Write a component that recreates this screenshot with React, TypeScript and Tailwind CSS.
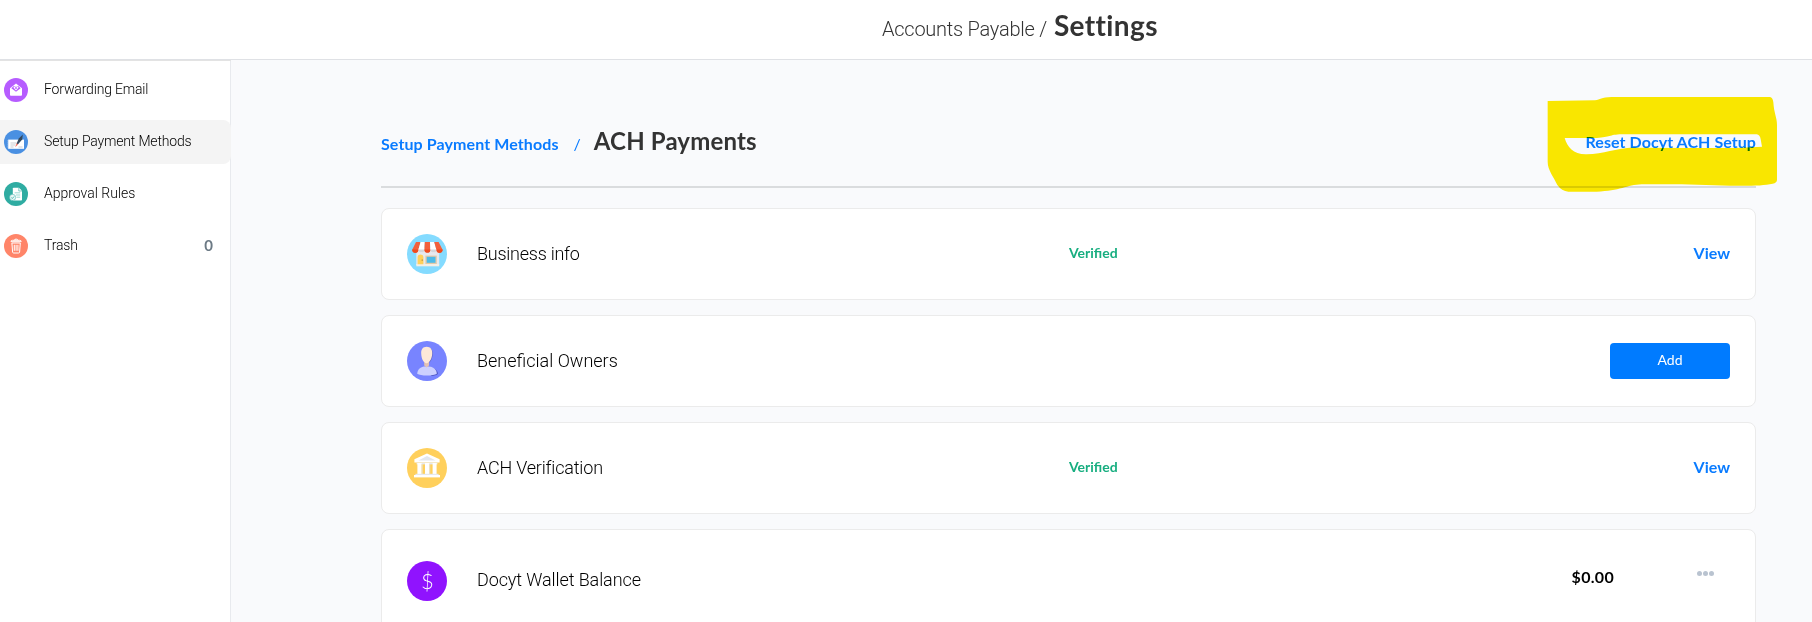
import type { ReactNode } from 'react'

function EmailIcon() {
  return (
    <svg className="size-6 shrink-0" viewBox="0 0 24 24">
      <circle cx="12" cy="12" r="12" fill="#b65cff" />
      <path d="M6 10.2 L12 5.6 L18 10.2 V16.8 Q18 17.7 17.1 17.7 H6.9 Q6 17.7 6 16.8 Z" fill="#fff" />
      <path d="M7.4 10.2 L9.4 8.2 H14.6 L16.6 10.2 L12 13.8 Z" fill="#b65cff" />
      <path d="M9.4 9.6 Q12 6.8 14.6 9.6 L12 12.6 Z" fill="#fff" />
      <circle cx="12" cy="10" r="0.9" fill="#b65cff" />
    </svg>
  )
}

function CheckbookIcon() {
  return (
    <svg className="size-6 shrink-0" viewBox="0 0 24 24">
      <circle cx="12" cy="12" r="12" fill="#4a90e2" />
      <rect x="4.2" y="9.6" width="15.8" height="9.2" fill="#fff" />
      <path d="M4 10.4v8" stroke="#c9def6" strokeWidth="1" strokeDasharray="1 1" />
      <path d="M6.5 13h6M6.5 15h5M6.5 17h3M14.5 17h4" stroke="#b4b9c0" strokeWidth="0.7" />
      <path d="M18.8 4.6 L18.2 9.6 L13.8 14.4 L12.6 13.4 L14.8 8.4 Z" fill="#34495e" />
      <path d="M12.6 13.2 L14 14.4 L11.2 17.2 Z" fill="#f2705f" />
    </svg>
  )
}

function RulesIcon() {
  return (
    <svg className="size-6 shrink-0" viewBox="0 0 24 24">
      <circle cx="12" cy="12" r="12" fill="#2faca2" />
      <path d="M8.8 6.6 Q8.8 5.8 9.6 5.8 H15 L18 8.8 V17.8 Q18 18.6 17.2 18.6 H9.6 Q8.8 18.6 8.8 17.8 Z" fill="#fff" />
      <path d="M14.8 5.8 V9 H18" stroke="#2faca2" strokeWidth="0.6" fill="none" />
      <path d="M10.6 10.8h5.6M12 13h4.2M12.6 15.2h3.6" stroke="#7fcfc8" strokeWidth="0.8" />
      <circle cx="8.6" cy="15.4" r="3.1" fill="#e9f7f6" stroke="#2faca2" strokeWidth="0.5" />
      <path d="M7.2 15.4l1.1 1.1 1.8-2" stroke="#2faca2" strokeWidth="0.8" fill="none" />
    </svg>
  )
}

function TrashIcon() {
  return (
    <svg className="size-6 shrink-0" viewBox="0 0 24 24">
      <circle cx="12" cy="12" r="12" fill="#ff8569" />
      <g fill="none" stroke="#fff" strokeWidth="1">
        <path d="M7 7.7 Q7 6.3 8.4 6.3 H15.8 Q17.2 6.3 17.2 7.7 Z" />
        <path d="M10.4 6.2 Q10.4 5.1 12.1 5.1 T13.8 6.2" />
        <path d="M7.9 9 L8.6 18.1 Q8.7 19 9.6 19 H14.6 Q15.5 19 15.6 18.1 L16.3 9 Z" />
        <path d="M10.3 10.8v6M12.1 10.8v6M13.9 10.8v6" />
      </g>
    </svg>
  )
}

function StoreIcon() {
  return (
    <svg className="size-10 shrink-0" viewBox="0 0 40 40">
      <circle cx="20" cy="20" r="20" fill="#84dbff" />
      <rect x="9.3" y="14" width="22.9" height="17" fill="#e6e9ee" />
      <rect x="9.3" y="30" width="22.9" height="2.3" fill="#f4efe6" />
      <path d="M10.6 30.2V23.4a2.9 2.9 0 0 1 5.8 0v6.8z" fill="#ffd05b" />
      <circle cx="15.2" cy="26" r="0.6" fill="#7a5a2a" />
      <rect x="18.4" y="21.6" width="11.4" height="8.4" fill="#e3c9a8" />
      <rect x="19.7" y="22.8" width="8.8" height="6" fill="#4cbbe8" />
      <path d="M9 8h4.6l-2.2 7.8a3 3 0 0 1-6.2 0z" fill="#f3603c" />
      <path d="M13.6 8h4.2l-.4 7.8a3 3 0 0 1-6 0z" fill="#fff" />
      <path d="M17.8 8h5.2l.4 7.8a3 3 0 0 1-6 0z" fill="#f3603c" />
      <path d="M23 8h4.2l2.2 7.8a3 3 0 0 1-6 0z" fill="#fff" />
      <path d="M27.2 8h4.4l4 7.8a3 3 0 0 1-6.2 0z" fill="#f3603c" />
      <path d="M11.4 15.4h6a3 3 0 0 1-6 .4zM23.4 15.4h6a3 3 0 0 1-6 .4z" fill="#d5d6db" />
      <path d="M17.4 15.4h6a3 3 0 0 1-6 .4zM5.2 15.4h6.2a3 3 0 0 1-6.2 .4zM29.4 15.4h6.2a3 3 0 0 1-6.2 .4z" fill="#ee4a1e" />
    </svg>
  )
}

function PersonIcon() {
  return (
    <svg className="size-10 shrink-0" viewBox="0 0 40 40">
      <circle cx="20" cy="20" r="20" fill="#7884ff" />
      <path d="M22 25.4 C27 26.6 31 29 31 33 C29 34.6 26 35 24 35z" fill="#5058c8" />
      <path d="M20.5 6 C25 6.6 26.2 10.5 25.6 14.5 C25 19 23 22 20.5 22z" fill="#5e63c4" />
      <path d="M10.2 32.8 C10.4 28.4 14 26 17 25.6 H22.4 C26.6 26.2 29.6 28.4 29.8 32.8 Q27 34.6 20 34.6 T10.2 32.8z" fill="#ccd0ff" />
      <path d="M17.2 20 H22 V24.4 L19.7 26.6 L17.2 24.4z" fill="#e2c2b4" />
      <path d="M19.6 5.8 C23.8 5.8 25.4 8.6 25.2 12.6 C25 18 22.4 22.2 19.6 22.2 C16.6 22.2 14.4 18 14.2 12.6 C14 8.6 15.6 5.8 19.6 5.8z" fill="#fde8d8" />
    </svg>
  )
}

function BankIcon() {
  return (
    <svg className="size-10 shrink-0" viewBox="0 0 40 40">
      <circle cx="20" cy="20" r="20" fill="#ffd05c" />
      <path d="M20 5.4 L32.6 11.2 V14.6 H7.4 V11.2z" fill="#fff" />
      <path d="M20 8 L28.6 12.4 H11.4z" fill="#e3e7ed" />
      <path d="M9.6 14.6h20.8v1.8H9.6z" fill="#e6e9ee" />
      <path d="M10.4 15h4.2v11.6h-4.2zM18 15h4.2v11.6H18zM25.6 15h4v11.6h-4z" fill="#fff" />
      <path d="M14.6 16h1v10.6h-1zM22.2 16h1v10.6h-1z" fill="#e9e4d3" />
      <path d="M8.4 25.8h23.2v1.4H8.4z" fill="#e6e9ee" />
      <path d="M7 27h26v2.4H7z" fill="#fff" />
    </svg>
  )
}

function DollarIcon() {
  return (
    <span className="flex size-10 shrink-0 items-center justify-center rounded-full bg-[#9013fe] pb-px pl-px font-['Lato',sans-serif] text-[22px] leading-none font-light text-white">
      $
    </span>
  )
}

function NavItem({ icon, active, count, children }: { icon: ReactNode; active?: boolean; count?: number; children: ReactNode }) {
  return (
    <li className={`flex h-11 items-center rounded-r-lg pr-[18px] pb-px pl-1 ${active ? 'bg-[#f4f4f4]' : ''}`}>
      {icon}
      <span className="ml-4 flex-1 pb-px">{children}</span>
      {count !== undefined && (
        <span className="font-['Lato',sans-serif] text-[15px] font-bold tracking-normal text-[#6c7a85]">{count}</span>
      )}
    </li>
  )
}

function Card({ icon, label, children }: { icon: ReactNode; label: ReactNode; children: ReactNode }) {
  return (
    <div className="flex h-[92px] items-center rounded-lg border border-[#ebebeb] bg-white px-[25px]">
      {icon}
      <div className="ml-[30px] w-[592px] pb-0.5 text-[18px] font-light text-black">{label}</div>
      {children}
    </div>
  )
}

function VerifiedActions() {
  return (
    <>
      <span className="flex-1 pb-0.5 font-['Lato',sans-serif] text-sm font-bold text-[#18ae80]">Verified</span>
      <a className="pb-0.5 font-['Lato',sans-serif] text-base font-bold text-[#097bff]">View</a>
    </>
  )
}

function MarkerHighlight() {
  return (
    <svg
      className="pointer-events-none absolute -top-[45px] -right-11 h-[115px] w-[270px] mix-blend-multiply"
      viewBox="0 0 810 345"
    >
      <path
        fill="#ffeb00"
        fillRule="evenodd"
        d="M53 48 L195 46 C212 43 212 37 245 36 L720 36 Q728 37 730 52 C732 85 741 98 741 120 V284 Q741 293 728 296 C700 302 660 303 600 302 L455 298 H335 C290 300 270 318 200 320 H115 Q95 318 82 300 C72 276 53 256 53 230 Z
           M104 159 H200 C242 157 236 149 275 148 H680 Q690 149 692 163 L696 185 L620 189 H480 L300 188 C262 190 220 206 170 208 C130 209 112 186 104 159 Z"
      />
    </svg>
  )
}

export default function App() {
  return (
    <div className="flex h-[622px] flex-col overflow-hidden bg-[#f9fafc] font-['Roboto',sans-serif]">
      <header className="flex h-[60px] shrink-0 items-baseline border-b border-[#dfe1e5] bg-white pt-2 pl-[882px] text-[#333]">
        <span className="text-xl font-light tracking-[-0.25px] whitespace-pre">Accounts Payable /</span>
        <h1 className="ml-[7px] font-['Lato',sans-serif] text-[28px] leading-[34px] font-bold tracking-[0.37px]">Settings</h1>
      </header>

      <div className="flex min-h-0 flex-1">
        <aside className="w-[231px] shrink-0 border-r border-[#e8eaee] bg-white">
          <ul className="-mr-px flex flex-col gap-2 border-t border-[#e3e3e3] pt-[7px] text-sm font-light tracking-[-0.17px] text-black">
            <NavItem icon={<EmailIcon />}>Forwarding Email</NavItem>
            <NavItem icon={<CheckbookIcon />} active>Setup Payment Methods</NavItem>
            <NavItem icon={<RulesIcon />}><span className="tracking-normal">Approval Rules</span></NavItem>
            <NavItem icon={<TrashIcon />} count={0}>Trash</NavItem>
          </ul>
        </aside>

        <main className="flex-1 pt-[65px] pr-14 pl-[150px]">
          <div className="flex h-[63px] items-baseline border-b-2 border-[#dadcde] font-['Lato',sans-serif] font-bold">
            <a className="text-base tracking-[0.1px] text-[#097bff]">Setup Payment Methods</a>
            <span className="ml-[15px] text-base font-normal text-[#097bff]">/</span>
            <h2 className="ml-[13px] text-2xl tracking-[0.15px] text-[#333]">ACH Payments</h2>
            <div className="relative mt-[5px] ml-auto self-start">
              <a className="block text-base tracking-[0.06px] text-[#097bff]">Reset Docyt ACH Setup</a>
              <MarkerHighlight />
            </div>
          </div>

          <div className="mt-5 flex flex-col gap-[15px]">
            <Card icon={<StoreIcon />} label={<span className="tracking-[-0.25px]">Business info</span>}>
              <VerifiedActions />
            </Card>
            <Card icon={<PersonIcon />} label="Beneficial Owners">
              <button className="ml-auto h-9 w-[120px] rounded bg-[#007bff] pb-0.5 font-['Lato',sans-serif] text-sm text-white">
                Add
              </button>
            </Card>
            <Card icon={<BankIcon />} label={<span className="tracking-[-0.19px]">ACH Verification</span>}>
              <VerifiedActions />
            </Card>
            <div className="flex h-[104px] items-center rounded-lg border border-[#ebebeb] bg-white px-[25px]">
              <DollarIcon />
              <div className="ml-[30px] flex-1 pb-1 text-[18px] font-light tracking-[-0.1px] text-black">
                Docyt Wallet Balance
              </div>
              <span className="pb-2 font-['Lato',sans-serif] text-base font-bold tracking-[0.3px] text-black">$0.00</span>
              <span className="mr-[16px] ml-[83px] flex gap-px pb-[15px]">
                <i className="size-[5px] rounded-full bg-[#b9c3d0]" />
                <i className="size-[5px] rounded-full bg-[#b9c3d0]" />
                <i className="size-[5px] rounded-full bg-[#b9c3d0]" />
              </span>
            </div>
          </div>
        </main>
      </div>
    </div>
  )
}
